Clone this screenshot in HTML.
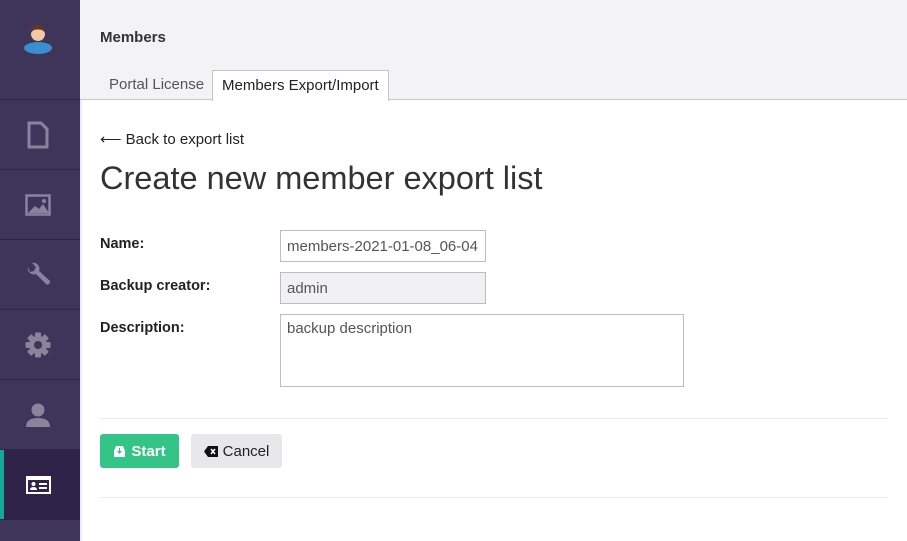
<!DOCTYPE html>
<html><head><meta charset="utf-8"><style>
*{box-sizing:border-box;margin:0;padding:0}
body{width:907px;height:541px;overflow:hidden;font-family:"Liberation Sans",sans-serif;background:#fff;position:relative;color:#222}
.sb{position:absolute;left:0;top:0;width:80px;height:541px;background:#3f3459}
.sb .it{position:absolute;left:0;width:80px;height:70px;border-top:1px solid #2e2545;display:flex;align-items:center;justify-content:center;padding-right:4px}
.sb .act{background:#30234a}
.sb .act:before{content:"";position:absolute;left:0;top:0;bottom:0;width:4px;background:#12aa96}
.shadow{position:absolute;left:80px;top:0;width:3px;height:541px;background:linear-gradient(90deg,#e6e6e8,#fff0)}
.hdr{position:absolute;left:80px;top:0;right:0;height:100px;background:#f3f3f5;border-bottom:1px solid #c9c9cc}
.hdr h1{position:absolute;left:20px;top:29px;font-size:15px;font-weight:bold;color:#333}
.tab{position:absolute;top:70px;height:30px;font-size:15px;padding:6px 9px 0;color:#555}
.tab.on{background:#fff;border:1px solid #c4c4c8;border-bottom:none;color:#222;height:31px}
.back{position:absolute;left:100px;top:130px;font-size:15px;color:#222}
.title{position:absolute;left:100px;top:160px;font-size:32.5px;color:#333}
.lbl{position:absolute;left:100px;font-size:14.5px;font-weight:bold;color:#222}
.inp{position:absolute;left:280px;border:1px solid #bdbdc0;font-size:15px;color:#555;padding:7px 6px;background:#fff;overflow:hidden;white-space:nowrap}
.hr{position:absolute;left:100px;right:19px;height:1px;background:#ececee}
.btn{position:absolute;top:434px;height:34px;border-radius:3px;font-size:15px;display:flex;align-items:center;justify-content:center;gap:5px}
</style></head><body>
<div class="sb">
 <div style="position:absolute;left:23px;top:22px">
  <svg width="30" height="32" viewBox="0 0 30 32"><ellipse cx="15" cy="26" rx="14" ry="6" fill="#3a8fd0"/><circle cx="15" cy="12" r="7" fill="#f3c8a4"/><path d="M8 11 Q8 3 15 3 Q22 3 22 11 Q20 7 15 7.5 Q10 7 8 11Z" fill="#5a3a22"/></svg>
 </div>
 <div class="it" style="top:99px"><svg width="22" height="28" viewBox="0 0 22 28"><path d="M2 2h12l6 6v18H2z" fill="none" stroke="#8a839b" stroke-width="3"/></svg></div>
 <div class="it" style="top:169px"><svg width="26" height="22" viewBox="0 0 26 22"><rect x="1.5" y="1.5" width="23" height="19" fill="none" stroke="#8a839b" stroke-width="2.5"/><path d="M3 19l7-7 4 3 4-5 6 9z" fill="#8a839b"/><circle cx="19" cy="7" r="2" fill="#8a839b"/></svg></div>
 <div class="it" style="top:239px"><svg width="26" height="28" viewBox="0 0 26 26"><path d="M3 5a6 6 0 0 0 8 7l10 10a2.5 2.5 0 0 0 3.5-3.5L14 9a6 6 0 0 0-7-8l4 4-2 4-4 1z" fill="#8a839b"/></svg></div>
 <div class="it" style="top:309px"><svg width="26" height="26" viewBox="0 0 26 26"><g fill="#8a839b"><circle cx="13" cy="13" r="9"/><rect x="10" y="0.5" width="6" height="25" rx="1"/><rect x="0.5" y="10" width="25" height="6" rx="1"/><rect x="10" y="0.5" width="6" height="25" rx="1" transform="rotate(45 13 13)"/><rect x="10" y="0.5" width="6" height="25" rx="1" transform="rotate(-45 13 13)"/></g><circle cx="13" cy="13" r="4" fill="#3f3459"/></svg></div>
 <div class="it" style="top:379px"><svg width="26" height="26" viewBox="0 0 26 26"><circle cx="13" cy="8" r="6.5" fill="#8a839b"/><path d="M1 25q0-9 12-9t12 9z" fill="#8a839b"/></svg></div>
 <div class="it act" style="top:449px"><svg width="27" height="20" viewBox="0 0 27 20"><rect x="1" y="1" width="25" height="18" fill="#fff"/><rect x="3" y="5" width="21" height="12" fill="#30234a"/><circle cx="8.5" cy="9" r="2" fill="#fff"/><path d="M5 15q0-3 3.5-3t3.5 3z" fill="#fff"/><rect x="14" y="8" width="8" height="2" fill="#fff"/><rect x="14" y="12" width="8" height="2" fill="#fff"/></svg></div>
 <div class="it" style="top:519px;height:22px"></div>
</div>
<div class="shadow"></div>
<div class="hdr"><h1>Members</h1>
 <div class="tab" style="left:20px">Portal License</div>
 <div class="tab on" style="left:132px">Members Export/Import</div>
</div>
<div class="back">⟵ Back to export list</div>
<div class="title">Create new member export list</div>
<div class="lbl" style="top:236px">Name:</div>
<div class="lbl" style="top:278px">Backup creator:</div>
<div class="lbl" style="top:320px">Description:</div>
<div class="inp" style="top:230px;width:206px;height:32px">members-2021-01-08_06-04</div>
<div class="inp" style="top:272px;width:206px;height:32px;background:#f1f1f3">admin</div>
<div class="inp" style="top:314px;width:404px;height:73px;padding-top:5px">backup description</div>
<div class="hr" style="top:418px"></div>
<div class="btn" style="left:100px;width:79px;background:#35c487;color:#fff;font-weight:bold"><svg width="13" height="13" viewBox="0 0 13 13"><path d="M1 6l2-5h7l2 5v6H1z" fill="#fff"/><path d="M4 6h2V3h1v3h2l-2.5 3z" fill="#35c487"/></svg>Start</div>
<div class="btn" style="left:191px;width:91px;background:#e8e8ea;color:#222"><svg width="14" height="11" viewBox="0 0 14 11"><path d="M4 0h10v11H4L0 5.5z" fill="#111"/><path d="M7 3l4 5M11 3l-4 5" stroke="#fff" stroke-width="1.5"/></svg>Cancel</div>
<div class="hr" style="top:497px"></div>
</body></html>
